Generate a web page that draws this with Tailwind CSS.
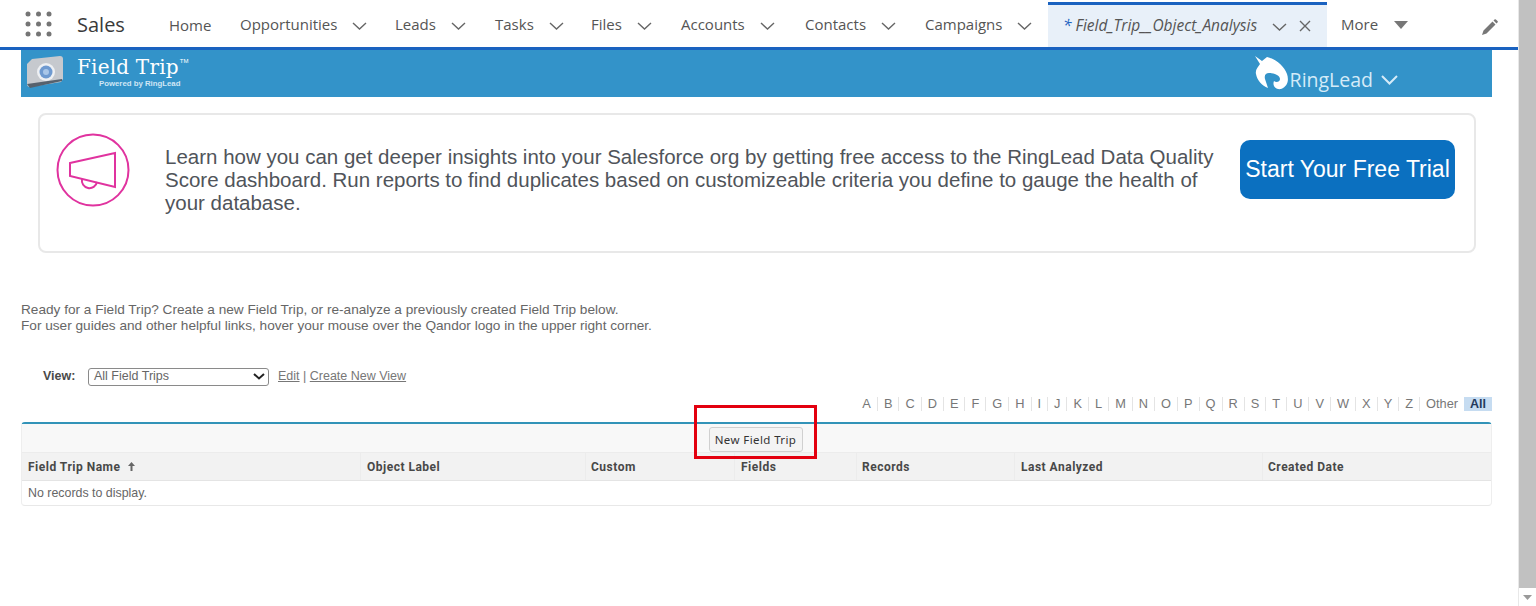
<!DOCTYPE html>
<html lang="en">
<head>
<meta charset="utf-8">
<title>Field Trip</title>
<script src="https://cdn.jsdelivr.net/npm/@tailwindcss/browser@4"></script>
</head>
<body class="bg-white overflow-hidden">
<div class="flex h-[606px] w-[1536px] overflow-hidden font-['Liberation_Sans',sans-serif]">
  <div class="w-[1518px] shrink-0 flex flex-col">
    <!-- Nav -->
    <nav class="h-[50px] shrink-0 flex border-b-[3px] border-[#1a62c0] font-['Open_Sans',sans-serif] text-[15px] text-[#555] relative">
      <svg class="ml-[25px] mt-[11px] w-[27px] h-[27px]" viewBox="0 0 27 27" fill="#757575"><circle cx="3" cy="3" r="2.500"/><circle cx="13.500" cy="3" r="2.500"/><circle cx="24" cy="3" r="2.500"/><circle cx="3" cy="13" r="2.500"/><circle cx="13.500" cy="13" r="2.500"/><circle cx="24" cy="13" r="2.500"/><circle cx="3" cy="23" r="2.500"/><circle cx="13.500" cy="23" r="2.500"/><circle cx="24" cy="23" r="2.500"/></svg>
      <span class="ml-[25px] w-[92px] text-[20px] leading-[50px] text-[#3a3a3a] h-[47px]">Sales</span>
      <span class="w-[71px] leading-[50px]">Home</span>
      <div class="w-[155px] flex items-center h-[49px] gap-[15px]"><span>Opportunities</span><svg class="w-[15px] h-[8px] mt-[3px]" viewBox="0 0 15 8" fill="none" stroke="#666" stroke-width="1.4"><path d="M1 1l6.500 6 6.500-6"/></svg></div>
      <div class="w-[100px] flex items-center h-[49px] gap-[15px]"><span>Leads</span><svg class="w-[15px] h-[8px] mt-[3px]" viewBox="0 0 15 8" fill="none" stroke="#666" stroke-width="1.4"><path d="M1 1l6.500 6 6.500-6"/></svg></div>
      <div class="w-[96px] flex items-center h-[49px] gap-[15px]"><span>Tasks</span><svg class="w-[15px] h-[8px] mt-[3px]" viewBox="0 0 15 8" fill="none" stroke="#666" stroke-width="1.4"><path d="M1 1l6.500 6 6.500-6"/></svg></div>
      <div class="w-[90px] flex items-center h-[49px] gap-[15px]"><span>Files</span><svg class="w-[15px] h-[8px] mt-[3px]" viewBox="0 0 15 8" fill="none" stroke="#666" stroke-width="1.4"><path d="M1 1l6.500 6 6.500-6"/></svg></div>
      <div class="w-[124px] flex items-center h-[49px] gap-[15px]"><span>Accounts</span><svg class="w-[15px] h-[8px] mt-[3px]" viewBox="0 0 15 8" fill="none" stroke="#666" stroke-width="1.4"><path d="M1 1l6.500 6 6.500-6"/></svg></div>
      <div class="w-[120px] flex items-center h-[49px] gap-[15px]"><span>Contacts</span><svg class="w-[15px] h-[8px] mt-[3px]" viewBox="0 0 15 8" fill="none" stroke="#666" stroke-width="1.4"><path d="M1 1l6.500 6 6.500-6"/></svg></div>
      <div class="w-[123px] flex items-center h-[49px] gap-[15px]"><span>Campaigns</span><svg class="w-[15px] h-[8px] mt-[3px]" viewBox="0 0 15 8" fill="none" stroke="#666" stroke-width="1.4"><path d="M1 1l6.500 6 6.500-6"/></svg></div>
      <div class="w-[279px] h-[45px] mt-[2px] bg-[#e8f0f9] border-t-[3px] border-[#1a62c0] flex items-center pl-[15px] text-[#555]">
        <span class="italic text-[15.500px] whitespace-nowrap w-[209px]"><span class="text-[#1a62c0]">*</span> Field_Trip__Object_Analysis</span>
        <svg class="w-[15px] h-[8px] mt-[1px]" viewBox="0 0 15 8" fill="none" stroke="#666" stroke-width="1.4"><path d="M1 1l6.500 6 6.500-6"/></svg>
        <svg class="ml-[12px] w-[12px] h-[12px]" viewBox="0 0 12 12" fill="none" stroke="#666" stroke-width="1.4"><path d="M1 1l10 10M11 1L1 11"/></svg>
      </div>
      <span class="ml-[14px] w-[53px] leading-[48px]">More</span>
      <svg class="w-[14px] h-[8px] mt-[21px]" viewBox="0 0 14 8" fill="#777"><path d="M0 0h14L7 8z"/></svg>
      <svg class="ml-[73px] mt-[19px] w-[17px] h-[17px]" viewBox="0 0 17 17" fill="#777"><path d="M11.500 2.500l3 3L5.500 14.500 1 16l1.500-4.500zM12.500 1.500l1-1a1 1 0 0 1 1.400 0l1.600 1.600a1 1 0 0 1 0 1.400l-1 1z"/></svg>
    </nav>

    <div class="mx-[21px] w-[1471px] flex flex-col">
      <!-- Field trip header -->
      <header class="h-[47px] bg-[#3393c9] flex items-start relative">
        <svg class="ml-[5px] mt-[5px] w-[38px] h-[34px]" viewBox="0 0 38 34"><path d="M1 9l5-5 28-3q3 0 3 3v20l-2 3-31 5q-3 0-3-3z" fill="#c6c9ce"/><path d="M1 29l35-5v2L4 33z" fill="#56616d"/><circle cx="20" cy="17" r="9" fill="#eef0f3"/><circle cx="20" cy="17" r="6.500" fill="#6f9ad0"/><circle cx="20" cy="17" r="3" fill="#a9c6e8"/></svg>
        <div class="ml-[13px] mt-[4px] flex flex-col text-white">
          <div class="flex items-start h-[23px]"><span class="font-['DejaVu_Serif',serif] text-[20px] leading-[26px] tracking-[0.2px] whitespace-nowrap">Field Trip</span><span class="text-[6px] leading-[6px] mt-[4px] ml-[1px]">TM</span></div>
          <span class="ml-[22px] mt-[2px] text-[7.800px] leading-[9px] font-bold text-[#cfe6f5] whitespace-nowrap">Powered by RingLead</span>
        </div>
        <div class="ml-auto mr-[94px] mt-[5px] flex items-start text-white">
          <svg class="w-[34px] h-[35px]" viewBox="0 0 34 35" fill="#fff"><path d="M0 1l7 5 5-4c9 2 17 9 20 17 2 6 1 12-6 15-5 1-9-3-7-8 2 2 6 1 6-2 0-4-7-6-11-6-3 0-5 2-4 6l3 9c-6-2-11-8-12-14-1-4 2-7 4-10z"/></svg>
          <span class="font-['Open_Sans',sans-serif] text-[19.500px] leading-[26px] text-[#d5ebf8] mt-[12px] ml-[1px]">RingLead</span>
          <svg class="ml-[8px] mt-[20px] w-[17px] h-[10px]" viewBox="0 0 17 10" fill="none" stroke="#d5ebf8" stroke-width="2"><path d="M1 1l7.500 7.500L16 1"/></svg>
        </div>
      </header>

      <!-- Promo -->
      <section class="mt-[16px] ml-[17px] w-[1438px] h-[140px] border-2 border-[#e8e8e8] rounded-[8px] flex items-start">
        <svg class="ml-[16px] mt-[18px] w-[74px] h-[74px]" viewBox="0 0 74 74" fill="none" stroke="#e0339f" stroke-width="2"><circle cx="37" cy="37" r="35.500"/><path d="M14 30L59 20V54L14 43Z" stroke-width="2"/><path d="M26 46a7.500 7.500 0 0 0 15 3" stroke-width="2"/></svg>
        <p class="ml-[35px] mt-[30px] w-[1056px] text-[20.500px] leading-[23px] text-[#50545a]">Learn how you can get deeper insights into your Salesforce org by getting free access to the RingLead Data Quality Score dashboard. Run reports to find duplicates based on customizeable criteria you define to gauge the health of your database.</p>
        <button class="ml-[19px] mt-[25px] w-[215px] h-[59px] bg-[#0b70c0] rounded-[10px] text-white text-[23px] whitespace-nowrap flex items-center justify-center">Start Your Free Trial</button>
      </section>

      <!-- Intro -->
      <p class="mt-[49px] text-[13.640px] leading-[16px] text-[#666]">Ready for a Field Trip? Create a new Field Trip, or re-analyze a previously created Field Trip below.<br>For user guides and other helpful links, hover your mouse over the Qandor logo in the upper right corner.</p>

      <!-- View -->
      <div class="mt-[33px] ml-[22px] h-[18px] flex items-center text-[12.500px]">
        <span class="font-bold text-[#4a4a4a] w-[45px]">View:</span>
        <div class="w-[181px] h-[18px] border border-[#8a8a8a] rounded-[3px] flex items-center justify-between pl-[5px] pr-[3px] text-[#666] mt-[1px]">
          <span>All Field Trips</span>
          <svg class="w-[12px] h-[7px]" viewBox="0 0 12 7" fill="none" stroke="#222" stroke-width="2"><path d="M1 1l5 4.500L11 1"/></svg>
        </div>
        <span class="ml-[9px] text-[#777]"><span class="underline">Edit</span> | <span class="underline">Create New View</span></span>
      </div>

      <!-- Alpha -->
      <div class="mt-[12px] h-[14px] flex justify-end items-center text-[12.800px] text-[#777] leading-[14px]">
        <span class="pr-[6px]">A</span><span class="border-l border-[#e4e4e4] px-[6px]">B</span><span class="border-l border-[#e4e4e4] px-[6px]">C</span><span class="border-l border-[#e4e4e4] px-[6px]">D</span><span class="border-l border-[#e4e4e4] px-[6px]">E</span><span class="border-l border-[#e4e4e4] px-[6px]">F</span><span class="border-l border-[#e4e4e4] px-[6px]">G</span><span class="border-l border-[#e4e4e4] px-[6px]">H</span><span class="border-l border-[#e4e4e4] px-[6px]">I</span><span class="border-l border-[#e4e4e4] px-[6px]">J</span><span class="border-l border-[#e4e4e4] px-[6px]">K</span><span class="border-l border-[#e4e4e4] px-[6px]">L</span><span class="border-l border-[#e4e4e4] px-[6px]">M</span><span class="border-l border-[#e4e4e4] px-[6px]">N</span><span class="border-l border-[#e4e4e4] px-[6px]">O</span><span class="border-l border-[#e4e4e4] px-[6px]">P</span><span class="border-l border-[#e4e4e4] px-[6px]">Q</span><span class="border-l border-[#e4e4e4] px-[6px]">R</span><span class="border-l border-[#e4e4e4] px-[6px]">S</span><span class="border-l border-[#e4e4e4] px-[6px]">T</span><span class="border-l border-[#e4e4e4] px-[6px]">U</span><span class="border-l border-[#e4e4e4] px-[6px]">V</span><span class="border-l border-[#e4e4e4] px-[6px]">W</span><span class="border-l border-[#e4e4e4] px-[6px]">X</span><span class="border-l border-[#e4e4e4] px-[6px]">Y</span><span class="border-l border-[#e4e4e4] px-[6px]">Z</span><span class="border-l border-[#e4e4e4] px-[6px]">Other</span><span class="bg-[#c6dcf1] px-[6px] font-bold text-[#23395b] text-[12.500px]">All</span>
      </div>

      <!-- Table -->
      <div class="mt-[11px] border-t-2 border-[#3293b8] border-x border-b border-x-[#eeeeee] border-b-[#e8e8e8] rounded-[4px] text-[12px]">
        <div class="h-[29px] bg-[#f8f8f8] flex justify-center items-center relative border-b border-[#ececec]">
          <button class="ml-[-2px] mt-[3px] w-[94px] h-[25px] bg-[#f4f4f4] border border-[#d0d0d0] rounded-[3px] text-[11.500px] tracking-[0.4px] text-[#333] font-['Noto_Sans',sans-serif] whitespace-nowrap">New Field Trip</button>
          <div class="absolute left-[672px] top-[-19px] w-[123px] h-[54px] border-[3px] border-[#e3000f]"></div>
        </div>
        <div class="grid grid-cols-[338px_225px_149px_122px_158px_248px_1fr] h-[28px] bg-[#f2f2f2] border-b border-[#e4e4e4] items-center font-bold text-[#484848] font-['Roboto',sans-serif] tracking-[0.5px]">
          <div class="pl-[6px] h-full flex items-center gap-[8px]">Field Trip Name <svg class="w-[7px] h-[9px]" viewBox="0 0 7 9" fill="#666"><path d="M3.500 0L7 4H4.500v5h-2V4H0z"/></svg></div>
          <div class="pl-[6px] h-full flex items-center border-l border-[#ececec]">Object Label</div>
          <div class="pl-[5px] h-full flex items-center border-l border-[#ececec]">Custom</div>
          <div class="pl-[6px] h-full flex items-center border-l border-[#ececec]">Fields</div>
          <div class="pl-[5px] h-full flex items-center border-l border-[#ececec]">Records</div>
          <div class="pl-[6px] h-full flex items-center border-l border-[#ececec]">Last Analyzed</div>
          <div class="pl-[5px] h-full flex items-center border-l border-[#ececec]">Created Date</div>
        </div>
        <div class="h-[24px] pl-[6px] flex items-center text-[12.400px] text-[#666]">No records to display.</div>
      </div>
    </div>
  </div>
  <!-- Scrollbar -->
  <div class="w-[18px] shrink-0 flex flex-col border-l border-[#e8e8e8]">
    <div class="flex-1 bg-[#c1c1c1]"></div>
    <div class="h-[18px] bg-white flex items-center justify-center">
      <svg class="w-[9px] h-[5px]" viewBox="0 0 9 5" fill="#9a9a9a"><path d="M0 0h9L4.500 5z"/></svg>
    </div>
  </div>
</div>
</body>
</html>
